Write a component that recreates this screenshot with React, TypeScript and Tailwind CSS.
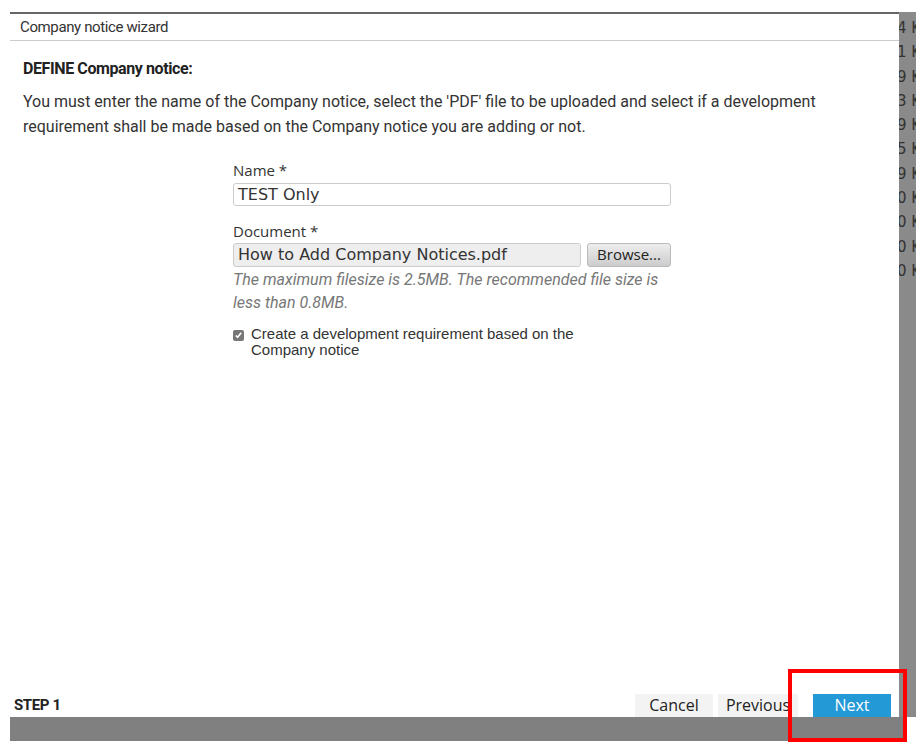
export default function App() {
	const sizes = ["4", "1", "9", "3", "9", "5", "9", "0", "0", "0", "0"];
	return (
		<div className="relative w-[916px] h-[751px] bg-white overflow-hidden" style={{ fontFamily: "Roboto, 'Liberation Sans', sans-serif" }}>
			<div className="absolute left-[899px] top-[12px] w-[17px] h-[705px] bg-[#8a8a8a] overflow-hidden pt-[4px]">
				{sizes.map((s, i) => (
					<div key={i} className="h-[24.3px] text-[15px] leading-[24px] text-[#333] whitespace-nowrap -ml-[2px]" style={{ fontFamily: "'DejaVu Sans', sans-serif" }}>
						{s} K
					</div>
				))}
			</div>
			<div className="absolute left-[10px] top-[12px] w-[889px] h-[705px] bg-white border-t-2 border-[#666] flex flex-col">
				<div className="h-[27px] flex items-center pl-[10px] text-[15px] text-[#333] border-b border-[#ccc] tracking-tight">Company notice wizard</div>
				<div className="px-[13px] pt-[16px]">
					<div className="text-[16px] font-bold text-[#222] tracking-tight">DEFINE Company notice:</div>
					<p className="mt-[8px] w-[840px] text-[16px] leading-[25px] text-[#333]">You must enter the name of the Company notice, select the 'PDF' file to be uploaded and select if a development requirement shall be made based on the Company notice you are adding or not.</p>
				</div>
				<div className="ml-[223px] mt-[20px] w-[438px]" style={{ fontFamily: "'Open Sans', 'Liberation Sans', sans-serif" }}>
					<div className="text-[15px] text-[#333]">Name *</div>
					<div className="mt-[1px] h-[23px] border border-[#ccc] rounded-[3px] px-[4px] text-[16px] leading-[21px] text-[#333]" style={{ fontFamily: "'DejaVu Sans', sans-serif" }}>TEST Only</div>
					<div className="mt-[14px] text-[15px] text-[#333]">Document *</div>
					<div className="mt-[1px] flex gap-[6px]">
						<div className="w-[348px] h-[24px] border border-[#ccc] rounded-[3px] bg-[#eee] px-[4px] text-[16px] leading-[22px] text-[#333]" style={{ fontFamily: "'DejaVu Sans', sans-serif" }}>How to Add Company Notices.pdf</div>
						<div className="flex-1 h-[24px] rounded-[3px] border border-[#bbb] bg-gradient-to-b from-[#eee] to-[#ccc] text-center text-[15px] leading-[21px] text-[#222]">Browse...</div>
					</div>
					<p className="mt-[1px] text-[16px] leading-[23px] italic text-[#777]" style={{ fontFamily: "Roboto, sans-serif" }}>The maximum filesize is 2.5MB. The recommended file size is less than 0.8MB.</p>
					<div className="mt-[12px] flex items-start gap-[7px]">
						<div className="mt-[4px] w-[11px] h-[11px] rounded-[2px] bg-[#777] flex items-center justify-center shrink-0">
							<svg width="9" height="9" viewBox="0 0 10 10"><path d="M2 5l2 2 4-5" stroke="white" strokeWidth="1.8" fill="none" /></svg>
						</div>
						<div className="text-[15px] leading-[16px] text-[#333]" style={{ fontFamily: "'Liberation Sans', sans-serif" }}>Create a development requirement based on the<br />Company notice</div>
					</div>
				</div>
				<div className="flex-1" />
				<div className="h-[38px] flex items-center justify-between pl-[4px] pr-[8px] -mb-[7px]">
					<div className="text-[15px] font-bold text-[#222] tracking-tight">STEP 1</div>
					<div className="flex text-[16px]" style={{ fontFamily: "'Open Sans', 'Liberation Sans', sans-serif" }}>
						<div className="h-[23px] w-[78px] text-center bg-[#f3f3f3] text-[#222] leading-[23px]">Cancel</div>
						<div className="ml-[5px] h-[23px] w-[80px] text-center bg-[#f3f3f3] text-[#222] leading-[23px]">Previous</div>
						<div className="ml-[15px] h-[23px] w-[78px] text-center bg-[#2399d6] text-white leading-[23px]">Next</div>
					</div>
				</div>
			</div>
			<div className="absolute left-[10px] top-[717px] w-[896px] h-[24px] bg-[#808080]" />
			<div className="absolute left-[788px] top-[669px] w-[119px] h-[73px] border-[4px] border-[#ff0000]" />
		</div>
	);
}
